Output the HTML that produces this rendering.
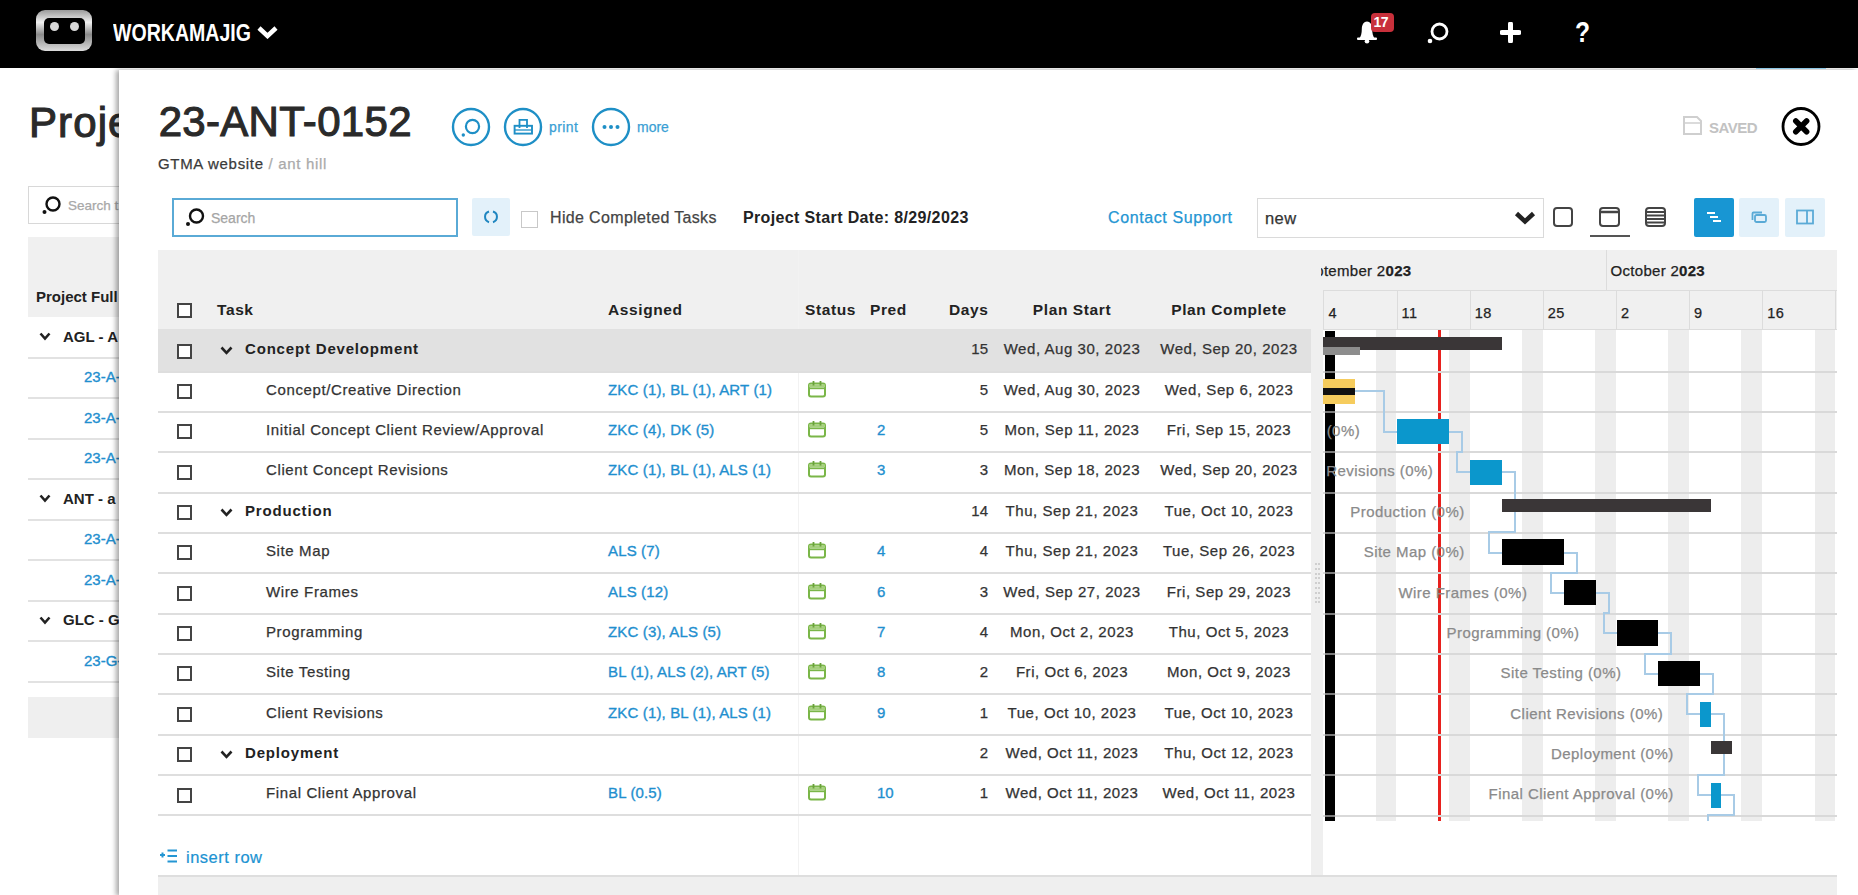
<!DOCTYPE html>
<html><head><meta charset="utf-8"><title>Workamajig</title>
<style>
*{box-sizing:border-box;margin:0;padding:0}
html,body{width:1858px;height:895px;overflow:hidden;background:#fff;font-family:"Liberation Sans", sans-serif;color:#333}
.ab{position:absolute}
.t{position:absolute;white-space:nowrap;line-height:1;-webkit-text-stroke:0.25px currentColor}
.cb{position:absolute;width:15px;height:15px;border:2px solid #444;background:#fff}
.blue{color:#1f8fcf;-webkit-text-stroke:0.35px #1f8fcf}
</style></head><body>

<div class="ab" style="left:0;top:0;width:1858px;height:68px;background:#000"></div>
<div class="ab" style="left:36px;top:10px;width:56px;height:40.8px;border-radius:9px;background:linear-gradient(180deg,#9a9a9a,#f0f0f0 30%,#8a8a8a 60%,#dcdcdc)"></div>
<div class="ab" style="left:43.5px;top:17.5px;width:41.5px;height:26.5px;border-radius:5px;background:#000"></div>
<div class="ab" style="left:50px;top:22.3px;width:9px;height:9px;border-radius:50%;background:#d8d8d8"></div>
<div class="ab" style="left:70px;top:22.3px;width:9px;height:9px;border-radius:50%;background:#d8d8d8"></div>
<div class="t" style="left:113px;top:22px;font-size:23px;font-weight:700;-webkit-text-stroke:0;color:#fff;transform:scaleX(0.85);transform-origin:0 0">WORKAMAJIG</div>
<svg class="ab" style="left:257px;top:26px" width="21" height="13" viewBox="0 0 21 13"><path d="M2 2 L10.5 10 L19 2" stroke="#fff" stroke-width="4.5" fill="none" stroke-linejoin="miter"/></svg>
<svg class="ab" style="left:1355px;top:17px" width="26" height="28" viewBox="0 0 26 28">
<path d="M4.5 21.5 C6 19 6.8 16.5 6.8 12 C6.8 7.5 9 4.5 12 4.5 C15 4.5 17.2 7.5 17.2 12 C17.2 16.5 18 19 19.5 21.5 Z" fill="#fff"/>
<rect x="2" y="20.5" width="20" height="2.6" rx="1" fill="#fff"/><circle cx="12" cy="24.2" r="2.3" fill="#fff"/></svg>
<div class="ab" style="left:1371px;top:13px;width:23px;height:19px;border-radius:4px;background:#c8303b"></div>
<div class="t" style="left:1373.5px;top:14.5px;font-size:14px;font-weight:700;-webkit-text-stroke:0;color:#fff;letter-spacing:-0.6px">17</div>
<svg class="ab" style="left:1427px;top:22px" width="23" height="22" viewBox="0 0 23 22">
<circle cx="12.5" cy="9.5" r="7.5" stroke="#fff" stroke-width="2.8" fill="none"/><circle cx="3" cy="19" r="2.3" fill="#fff"/></svg>
<svg class="ab" style="left:1500px;top:22px" width="21" height="21" viewBox="0 0 21 21">
<path d="M10.5 2 V19 M2 10.5 H19" stroke="#fff" stroke-width="5" stroke-linecap="round"/></svg>
<div class="t" style="left:1574.5px;top:18px;font-size:29px;font-weight:700;-webkit-text-stroke:0;color:#fff;transform:scaleX(0.85);transform-origin:0 0">?</div>
<div class="t" style="left:29px;top:101.5px;font-size:42px;color:#2a2a2a;-webkit-text-stroke:1.1px #2a2a2a;letter-spacing:1.1px">Projects</div>
<div class="ab" style="left:28px;top:186px;width:120px;height:38px;border:1px solid #d8d8d8;background:#fff"></div>
<svg class="ab" style="left:41px;top:195px" width="22" height="20" viewBox="0 0 22 20"><circle cx="12" cy="9" r="6.5" stroke="#111" stroke-width="2.4" fill="none"/><circle cx="3.5" cy="17" r="2" fill="#111"/></svg>
<div class="t" style="left:68px;top:199px;font-size:13.5px;color:#a8a8a8">Search t</div>
<div class="ab" style="left:28px;top:237px;width:100px;height:80px;background:#f0f0f0"></div>
<div class="t" style="left:36px;top:289px;font-size:15px;font-weight:700;-webkit-text-stroke:0;color:#222">Project Full</div>
<svg class="ab" style="left:39px;top:332.0px" width="12" height="9" viewBox="0 0 12 9"><path d="M1.5 1.5 L6 6.5 L10.5 1.5" stroke="#222" stroke-width="2.6" fill="none"/></svg>
<div class="t" style="left:63px;top:328.5px;font-size:15px;font-weight:700;-webkit-text-stroke:0;color:#222">AGL - A</div>
<div class="ab" style="left:28px;top:356.5px;width:100px;height:2px;background:#e2e2e2"></div>
<div class="t blue" style="left:84px;top:369.0px;font-size:15px">23-A-0001</div>
<div class="ab" style="left:28px;top:397.0px;width:100px;height:2px;background:#e2e2e2"></div>
<div class="t blue" style="left:84px;top:409.5px;font-size:15px">23-A-0001</div>
<div class="ab" style="left:28px;top:437.5px;width:100px;height:2px;background:#e2e2e2"></div>
<div class="t blue" style="left:84px;top:450.0px;font-size:15px">23-A-0001</div>
<div class="ab" style="left:28px;top:478.0px;width:100px;height:2px;background:#e2e2e2"></div>
<svg class="ab" style="left:39px;top:494.0px" width="12" height="9" viewBox="0 0 12 9"><path d="M1.5 1.5 L6 6.5 L10.5 1.5" stroke="#222" stroke-width="2.6" fill="none"/></svg>
<div class="t" style="left:63px;top:490.5px;font-size:15px;font-weight:700;-webkit-text-stroke:0;color:#222">ANT - a</div>
<div class="ab" style="left:28px;top:518.5px;width:100px;height:2px;background:#e2e2e2"></div>
<div class="t blue" style="left:84px;top:531.0px;font-size:15px">23-A-0001</div>
<div class="ab" style="left:28px;top:559.0px;width:100px;height:2px;background:#e2e2e2"></div>
<div class="t blue" style="left:84px;top:571.5px;font-size:15px">23-A-0001</div>
<div class="ab" style="left:28px;top:599.5px;width:100px;height:2px;background:#e2e2e2"></div>
<svg class="ab" style="left:39px;top:615.5px" width="12" height="9" viewBox="0 0 12 9"><path d="M1.5 1.5 L6 6.5 L10.5 1.5" stroke="#222" stroke-width="2.6" fill="none"/></svg>
<div class="t" style="left:63px;top:612.0px;font-size:15px;font-weight:700;-webkit-text-stroke:0;color:#222">GLC - G</div>
<div class="ab" style="left:28px;top:640.0px;width:100px;height:2px;background:#e2e2e2"></div>
<div class="t blue" style="left:84px;top:652.5px;font-size:15px">23-G-0001</div>
<div class="ab" style="left:28px;top:680.5px;width:100px;height:2px;background:#e2e2e2"></div>
<div class="ab" style="left:28px;top:697px;width:100px;height:41px;background:#efefef"></div>
<div class="ab" style="left:119px;top:69.5px;width:1739px;height:826px;background:#fff;box-shadow:-3px 0 5px rgba(0,0,0,0.35)"></div>
<div class="ab" style="left:1756px;top:68px;width:70px;height:1px;background:#8cc6e4"></div>
<div class="t" style="left:158.7px;top:100.8px;font-size:42px;color:#2a2a2a;-webkit-text-stroke:1.1px #2a2a2a;letter-spacing:0.3px">23-ANT-0152</div>
<svg class="ab" style="left:451px;top:106.5px" width="40" height="40" viewBox="0 0 40 40"><circle cx="20" cy="20" r="18" stroke="#1e8fc6" stroke-width="2.4" fill="none"/><circle cx="21.5" cy="19.5" r="6.6" stroke="#1e8fc6" stroke-width="2.2" fill="none"/><circle cx="12.3" cy="28" r="1.7" fill="#1e8fc6"/></svg>
<svg class="ab" style="left:503px;top:106.5px" width="40" height="40" viewBox="0 0 40 40"><circle cx="20" cy="20" r="18" stroke="#1e8fc6" stroke-width="2.4" fill="none"/><path d="M16.5 21 V12.8 H24 V21" stroke="#1e8fc6" stroke-width="1.8" fill="none"/><rect x="11.6" y="18.8" width="17.4" height="7.8" stroke="#1e8fc6" stroke-width="1.9" fill="none"/><path d="M12 23 H28.5" stroke="#1e8fc6" stroke-width="1.3"/></svg>
<div class="t" style="left:549px;top:120px;font-size:14px;color:#3a9fd5;letter-spacing:0.4px">print</div>
<svg class="ab" style="left:591px;top:106.5px" width="40" height="40" viewBox="0 0 40 40"><circle cx="20" cy="20" r="18" stroke="#1e8fc6" stroke-width="2.4" fill="none"/><circle cx="13.5" cy="20" r="2" fill="#1e8fc6"/><circle cx="20" cy="20" r="2" fill="#1e8fc6"/><circle cx="26.5" cy="20" r="2" fill="#1e8fc6"/></svg>
<div class="t" style="left:637px;top:120px;font-size:14px;color:#3a9fd5">more</div>
<div class="t" style="left:158px;top:156px;font-size:15px;color:#3a3a3a;letter-spacing:0.68px">GTMA website <span style="color:#aaa">/ ant hill</span></div>
<svg class="ab" style="left:1682px;top:115px" width="21" height="21" viewBox="0 0 21 21"><path d="M2 2 H15 L19 6 V19 H2 Z" stroke="#cfcfcf" stroke-width="2" fill="none"/><path d="M2 8 H19" stroke="#cfcfcf" stroke-width="1.5"/></svg>
<div class="t" style="left:1709px;top:119.5px;font-size:15px;font-weight:700;-webkit-text-stroke:0;color:#c2c2c2;letter-spacing:-0.5px">SAVED</div>
<svg class="ab" style="left:1780px;top:106px" width="42" height="42" viewBox="0 0 42 42"><circle cx="21" cy="20.5" r="18" stroke="#000" stroke-width="2.8" fill="none"/><path d="M15.8 15 L26.6 25.8 M26.6 15 L15.8 25.8" stroke="#000" stroke-width="5.6" stroke-linecap="round"/></svg>
<div class="ab" style="left:172px;top:198px;width:286px;height:39px;border:2px solid #5aaad6;background:#fff"></div>
<svg class="ab" style="left:184px;top:207px" width="22" height="20" viewBox="0 0 22 20"><circle cx="12.5" cy="9" r="6.5" stroke="#111" stroke-width="2.4" fill="none"/><circle cx="4" cy="17" r="2" fill="#111"/></svg>
<div class="t" style="left:211px;top:211px;font-size:14px;color:#a5a5a5">Search</div>
<div class="ab" style="left:472px;top:198px;width:38px;height:38px;background:#e3f1fa;border-radius:2px"></div>
<svg class="ab" style="left:481px;top:207px" width="20" height="20" viewBox="0 0 20 20"><path d="M8 4.5 A5.6 5.6 0 0 0 8 15.2 M12 4.5 A5.6 5.6 0 0 1 12 15.2" stroke="#1f86c0" stroke-width="2" fill="none"/></svg>
<div class="ab" style="left:521px;top:211px;width:17px;height:17px;border:1.5px solid #c8c8c8;background:#fff"></div>
<div class="t" style="left:550px;top:210px;font-size:16px;color:#444;letter-spacing:0.35px">Hide Completed Tasks</div>
<div class="t" style="left:743px;top:210px;font-size:16px;font-weight:700;-webkit-text-stroke:0;color:#222;letter-spacing:0.36px">Project Start Date: 8/29/2023</div>
<div class="t" style="left:1108px;top:210px;font-size:16px;color:#2496d3;letter-spacing:0.6px">Contact Support</div>
<div class="ab" style="left:1257px;top:198px;width:287px;height:40px;border:1.5px solid #dadada;background:#fff"></div>
<div class="t" style="left:1265px;top:209.5px;font-size:16.5px;color:#333;letter-spacing:0.4px">new</div>
<svg class="ab" style="left:1514px;top:211px" width="22" height="14" viewBox="0 0 22 14"><path d="M2.5 2.5 L11 10.5 L19.5 2.5" stroke="#222" stroke-width="4.5" fill="none"/></svg>
<svg class="ab" style="left:1552px;top:206px" width="22" height="22" viewBox="0 0 22 22"><rect x="2" y="2" width="18" height="18" rx="3" stroke="#444" stroke-width="2" fill="none"/></svg>
<svg class="ab" style="left:1598px;top:206px" width="23" height="22" viewBox="0 0 23 22"><rect x="2" y="2" width="19" height="18" rx="3" stroke="#444" stroke-width="2" fill="none"/><path d="M2 6 H21" stroke="#444" stroke-width="2.5"/></svg>
<div class="ab" style="left:1590px;top:235px;width:40px;height:2px;background:#555"></div>
<svg class="ab" style="left:1644px;top:206px" width="23" height="22" viewBox="0 0 23 22"><rect x="2" y="2" width="19" height="18" rx="3" stroke="#444" stroke-width="2" fill="none"/><path d="M3 6 H20 M3 9.5 H20 M3 13 H20 M3 16.5 H20" stroke="#444" stroke-width="2"/></svg>
<div class="ab" style="left:1694px;top:198px;width:40px;height:39px;background:#1896d3;border-radius:2px"></div>
<svg class="ab" style="left:1702px;top:207px" width="24" height="20" viewBox="0 0 24 20"><path d="M5 6 H13 M8 10 H16 M11 14 H19" stroke="#fff" stroke-width="2"/></svg>
<div class="ab" style="left:1739px;top:198px;width:40px;height:39px;background:#e3f1fa;border-radius:2px"></div>
<svg class="ab" style="left:1747px;top:207px" width="24" height="20" viewBox="0 0 24 20"><rect x="8" y="8" width="11" height="7" rx="1.5" stroke="#5aaad6" stroke-width="1.8" fill="none"/><path d="M5.5 13 V6.5 Q5.5 5.5 6.5 5.5 H15" stroke="#5aaad6" stroke-width="1.8" fill="none"/></svg>
<div class="ab" style="left:1785px;top:198px;width:40px;height:39px;background:#e3f1fa;border-radius:2px"></div>
<svg class="ab" style="left:1793px;top:207px" width="24" height="20" viewBox="0 0 24 20"><rect x="4" y="3.5" width="16" height="13" stroke="#5aaad6" stroke-width="1.8" fill="none"/><path d="M14 3.5 V16.5" stroke="#5aaad6" stroke-width="1.8"/></svg>
<div class="ab" style="left:158px;top:250px;width:1153px;height:79px;background:#f0f0f0"></div>
<div class="ab" style="left:1311px;top:250px;width:12px;height:626px;background:#efefef"></div>
<div class="ab" style="left:1314.5px;top:563.0px;width:2px;height:2px;background:#cfcfcf"></div><div class="ab" style="left:1318px;top:563.0px;width:2px;height:2px;background:#cfcfcf"></div>
<div class="ab" style="left:1314.5px;top:567.8px;width:2px;height:2px;background:#cfcfcf"></div><div class="ab" style="left:1318px;top:567.8px;width:2px;height:2px;background:#cfcfcf"></div>
<div class="ab" style="left:1314.5px;top:572.6px;width:2px;height:2px;background:#cfcfcf"></div><div class="ab" style="left:1318px;top:572.6px;width:2px;height:2px;background:#cfcfcf"></div>
<div class="ab" style="left:1314.5px;top:577.4px;width:2px;height:2px;background:#cfcfcf"></div><div class="ab" style="left:1318px;top:577.4px;width:2px;height:2px;background:#cfcfcf"></div>
<div class="ab" style="left:1314.5px;top:582.2px;width:2px;height:2px;background:#cfcfcf"></div><div class="ab" style="left:1318px;top:582.2px;width:2px;height:2px;background:#cfcfcf"></div>
<div class="ab" style="left:1314.5px;top:587.0px;width:2px;height:2px;background:#cfcfcf"></div><div class="ab" style="left:1318px;top:587.0px;width:2px;height:2px;background:#cfcfcf"></div>
<div class="ab" style="left:1314.5px;top:591.8px;width:2px;height:2px;background:#cfcfcf"></div><div class="ab" style="left:1318px;top:591.8px;width:2px;height:2px;background:#cfcfcf"></div>
<div class="ab" style="left:1314.5px;top:596.6px;width:2px;height:2px;background:#cfcfcf"></div><div class="ab" style="left:1318px;top:596.6px;width:2px;height:2px;background:#cfcfcf"></div>
<div class="ab" style="left:1314.5px;top:601.4px;width:2px;height:2px;background:#cfcfcf"></div><div class="ab" style="left:1318px;top:601.4px;width:2px;height:2px;background:#cfcfcf"></div>
<div class="cb" style="left:177px;top:303px"></div>
<div class="t" style="left:217px;top:302px;font-size:15.5px;font-weight:700;-webkit-text-stroke:0;color:#222;letter-spacing:0.6px">Task</div>
<div class="t" style="left:608px;top:302px;font-size:15.5px;font-weight:700;-webkit-text-stroke:0;color:#222;letter-spacing:0.6px">Assigned</div>
<div class="t" style="left:805px;top:302px;font-size:15.5px;font-weight:700;-webkit-text-stroke:0;color:#222;letter-spacing:0.6px">Status</div>
<div class="t" style="left:870px;top:302px;font-size:15.5px;font-weight:700;-webkit-text-stroke:0;color:#222;letter-spacing:0.6px">Pred</div>
<div class="t" style="left:788.5px;width:200px;text-align:right;top:302px;font-size:15.5px;font-weight:700;-webkit-text-stroke:0;color:#222;letter-spacing:0.6px">Days</div>
<div class="t" style="left:972px;width:200px;text-align:center;top:302px;font-size:15.5px;font-weight:700;-webkit-text-stroke:0;color:#222;letter-spacing:0.6px">Plan Start</div>
<div class="t" style="left:1129px;width:200px;text-align:center;top:302px;font-size:15.5px;font-weight:700;-webkit-text-stroke:0;color:#222;letter-spacing:0.6px">Plan Complete</div>
<div class="ab" style="left:798px;top:250px;width:1px;height:645px;background:#f2f2f2"></div>
<div class="ab" style="left:158px;top:329px;width:1153px;height:42.00px;background:#e1e1e1"></div>
<div class="ab" style="left:158px;top:370.50px;width:1153px;height:2px;background:#dedede"></div>
<div class="cb" style="left:177px;top:343.5px"></div>
<svg class="ab" style="left:220px;top:346.3px" width="13" height="9" viewBox="0 0 13 9"><path d="M1.5 1.5 L6.5 6.8 L11.5 1.5" stroke="#222" stroke-width="2.6" fill="none"/></svg>
<div class="t" style="left:245px;top:341.3px;font-size:15px;font-weight:700;-webkit-text-stroke:0;color:#222;letter-spacing:0.82px">Concept Development</div>
<div class="t" style="left:788px;width:200px;text-align:right;top:341.3px;font-size:15px;color:#333">15</div>
<div class="t" style="left:972px;width:200px;text-align:center;top:341.3px;font-size:15px;color:#333;letter-spacing:0.55px">Wed, Aug 30, 2023</div>
<div class="t" style="left:1129px;width:200px;text-align:center;top:341.3px;font-size:15px;color:#333;letter-spacing:0.55px">Wed, Sep 20, 2023</div>
<div class="ab" style="left:158px;top:410.86px;width:1153px;height:2px;background:#dedede"></div>
<div class="cb" style="left:177px;top:383.9px"></div>
<div class="t" style="left:266px;top:381.7px;font-size:15px;color:#333;letter-spacing:0.62px">Concept/Creative Direction</div>
<div class="t blue" style="left:608px;top:381.7px;font-size:15px;letter-spacing:0.15px">ZKC (1), BL (1), ART (1)</div>
<svg class="ab" style="left:807px;top:379.7px" width="20" height="19" viewBox="0 0 20 19"><rect x="2" y="3.5" width="16" height="13" rx="2" stroke="#7ab648" stroke-width="2" fill="none"/><path d="M2 8.3 H18" stroke="#7ab648" stroke-width="1.8"/><path d="M2 5.8 H18" stroke="#a6d07e" stroke-width="3"/><path d="M6.5 1 V5.5 M13.5 1 V5.5" stroke="#6aa23a" stroke-width="1.8"/></svg>
<div class="t" style="left:788px;width:200px;text-align:right;top:381.7px;font-size:15px;color:#333">5</div>
<div class="t" style="left:972px;width:200px;text-align:center;top:381.7px;font-size:15px;color:#333;letter-spacing:0.55px">Wed, Aug 30, 2023</div>
<div class="t" style="left:1129px;width:200px;text-align:center;top:381.7px;font-size:15px;color:#333;letter-spacing:0.55px">Wed, Sep 6, 2023</div>
<div class="ab" style="left:158px;top:451.22px;width:1153px;height:2px;background:#dedede"></div>
<div class="cb" style="left:177px;top:424.2px"></div>
<div class="t" style="left:266px;top:422.0px;font-size:15px;color:#333;letter-spacing:0.62px">Initial Concept Client Review/Approval</div>
<div class="t blue" style="left:608px;top:422.0px;font-size:15px;letter-spacing:0.15px">ZKC (4), DK (5)</div>
<svg class="ab" style="left:807px;top:420.0px" width="20" height="19" viewBox="0 0 20 19"><rect x="2" y="3.5" width="16" height="13" rx="2" stroke="#7ab648" stroke-width="2" fill="none"/><path d="M2 8.3 H18" stroke="#7ab648" stroke-width="1.8"/><path d="M2 5.8 H18" stroke="#a6d07e" stroke-width="3"/><path d="M6.5 1 V5.5 M13.5 1 V5.5" stroke="#6aa23a" stroke-width="1.8"/></svg>
<div class="t blue" style="left:877px;top:422.0px;font-size:15px">2</div>
<div class="t" style="left:788px;width:200px;text-align:right;top:422.0px;font-size:15px;color:#333">5</div>
<div class="t" style="left:972px;width:200px;text-align:center;top:422.0px;font-size:15px;color:#333;letter-spacing:0.55px">Mon, Sep 11, 2023</div>
<div class="t" style="left:1129px;width:200px;text-align:center;top:422.0px;font-size:15px;color:#333;letter-spacing:0.55px">Fri, Sep 15, 2023</div>
<div class="ab" style="left:158px;top:491.58px;width:1153px;height:2px;background:#dedede"></div>
<div class="cb" style="left:177px;top:464.6px"></div>
<div class="t" style="left:266px;top:462.4px;font-size:15px;color:#333;letter-spacing:0.62px">Client Concept Revisions</div>
<div class="t blue" style="left:608px;top:462.4px;font-size:15px;letter-spacing:0.15px">ZKC (1), BL (1), ALS (1)</div>
<svg class="ab" style="left:807px;top:460.4px" width="20" height="19" viewBox="0 0 20 19"><rect x="2" y="3.5" width="16" height="13" rx="2" stroke="#7ab648" stroke-width="2" fill="none"/><path d="M2 8.3 H18" stroke="#7ab648" stroke-width="1.8"/><path d="M2 5.8 H18" stroke="#a6d07e" stroke-width="3"/><path d="M6.5 1 V5.5 M13.5 1 V5.5" stroke="#6aa23a" stroke-width="1.8"/></svg>
<div class="t blue" style="left:877px;top:462.4px;font-size:15px">3</div>
<div class="t" style="left:788px;width:200px;text-align:right;top:462.4px;font-size:15px;color:#333">3</div>
<div class="t" style="left:972px;width:200px;text-align:center;top:462.4px;font-size:15px;color:#333;letter-spacing:0.55px">Mon, Sep 18, 2023</div>
<div class="t" style="left:1129px;width:200px;text-align:center;top:462.4px;font-size:15px;color:#333;letter-spacing:0.55px">Wed, Sep 20, 2023</div>
<div class="ab" style="left:158px;top:531.94px;width:1153px;height:2px;background:#dedede"></div>
<div class="cb" style="left:177px;top:505.0px"></div>
<svg class="ab" style="left:220px;top:507.8px" width="13" height="9" viewBox="0 0 13 9"><path d="M1.5 1.5 L6.5 6.8 L11.5 1.5" stroke="#222" stroke-width="2.6" fill="none"/></svg>
<div class="t" style="left:245px;top:502.8px;font-size:15px;font-weight:700;-webkit-text-stroke:0;color:#222;letter-spacing:0.82px">Production</div>
<div class="t" style="left:788px;width:200px;text-align:right;top:502.8px;font-size:15px;color:#333">14</div>
<div class="t" style="left:972px;width:200px;text-align:center;top:502.8px;font-size:15px;color:#333;letter-spacing:0.55px">Thu, Sep 21, 2023</div>
<div class="t" style="left:1129px;width:200px;text-align:center;top:502.8px;font-size:15px;color:#333;letter-spacing:0.55px">Tue, Oct 10, 2023</div>
<div class="ab" style="left:158px;top:572.30px;width:1153px;height:2px;background:#dedede"></div>
<div class="cb" style="left:177px;top:545.3px"></div>
<div class="t" style="left:266px;top:543.1px;font-size:15px;color:#333;letter-spacing:0.62px">Site Map</div>
<div class="t blue" style="left:608px;top:543.1px;font-size:15px;letter-spacing:0.15px">ALS (7)</div>
<svg class="ab" style="left:807px;top:541.1px" width="20" height="19" viewBox="0 0 20 19"><rect x="2" y="3.5" width="16" height="13" rx="2" stroke="#7ab648" stroke-width="2" fill="none"/><path d="M2 8.3 H18" stroke="#7ab648" stroke-width="1.8"/><path d="M2 5.8 H18" stroke="#a6d07e" stroke-width="3"/><path d="M6.5 1 V5.5 M13.5 1 V5.5" stroke="#6aa23a" stroke-width="1.8"/></svg>
<div class="t blue" style="left:877px;top:543.1px;font-size:15px">4</div>
<div class="t" style="left:788px;width:200px;text-align:right;top:543.1px;font-size:15px;color:#333">4</div>
<div class="t" style="left:972px;width:200px;text-align:center;top:543.1px;font-size:15px;color:#333;letter-spacing:0.55px">Thu, Sep 21, 2023</div>
<div class="t" style="left:1129px;width:200px;text-align:center;top:543.1px;font-size:15px;color:#333;letter-spacing:0.55px">Tue, Sep 26, 2023</div>
<div class="ab" style="left:158px;top:612.66px;width:1153px;height:2px;background:#dedede"></div>
<div class="cb" style="left:177px;top:585.7px"></div>
<div class="t" style="left:266px;top:583.5px;font-size:15px;color:#333;letter-spacing:0.62px">Wire Frames</div>
<div class="t blue" style="left:608px;top:583.5px;font-size:15px;letter-spacing:0.15px">ALS (12)</div>
<svg class="ab" style="left:807px;top:581.5px" width="20" height="19" viewBox="0 0 20 19"><rect x="2" y="3.5" width="16" height="13" rx="2" stroke="#7ab648" stroke-width="2" fill="none"/><path d="M2 8.3 H18" stroke="#7ab648" stroke-width="1.8"/><path d="M2 5.8 H18" stroke="#a6d07e" stroke-width="3"/><path d="M6.5 1 V5.5 M13.5 1 V5.5" stroke="#6aa23a" stroke-width="1.8"/></svg>
<div class="t blue" style="left:877px;top:583.5px;font-size:15px">6</div>
<div class="t" style="left:788px;width:200px;text-align:right;top:583.5px;font-size:15px;color:#333">3</div>
<div class="t" style="left:972px;width:200px;text-align:center;top:583.5px;font-size:15px;color:#333;letter-spacing:0.55px">Wed, Sep 27, 2023</div>
<div class="t" style="left:1129px;width:200px;text-align:center;top:583.5px;font-size:15px;color:#333;letter-spacing:0.55px">Fri, Sep 29, 2023</div>
<div class="ab" style="left:158px;top:653.02px;width:1153px;height:2px;background:#dedede"></div>
<div class="cb" style="left:177px;top:626.0px"></div>
<div class="t" style="left:266px;top:623.8px;font-size:15px;color:#333;letter-spacing:0.62px">Programming</div>
<div class="t blue" style="left:608px;top:623.8px;font-size:15px;letter-spacing:0.15px">ZKC (3), ALS (5)</div>
<svg class="ab" style="left:807px;top:621.8px" width="20" height="19" viewBox="0 0 20 19"><rect x="2" y="3.5" width="16" height="13" rx="2" stroke="#7ab648" stroke-width="2" fill="none"/><path d="M2 8.3 H18" stroke="#7ab648" stroke-width="1.8"/><path d="M2 5.8 H18" stroke="#a6d07e" stroke-width="3"/><path d="M6.5 1 V5.5 M13.5 1 V5.5" stroke="#6aa23a" stroke-width="1.8"/></svg>
<div class="t blue" style="left:877px;top:623.8px;font-size:15px">7</div>
<div class="t" style="left:788px;width:200px;text-align:right;top:623.8px;font-size:15px;color:#333">4</div>
<div class="t" style="left:972px;width:200px;text-align:center;top:623.8px;font-size:15px;color:#333;letter-spacing:0.55px">Mon, Oct 2, 2023</div>
<div class="t" style="left:1129px;width:200px;text-align:center;top:623.8px;font-size:15px;color:#333;letter-spacing:0.55px">Thu, Oct 5, 2023</div>
<div class="ab" style="left:158px;top:693.38px;width:1153px;height:2px;background:#dedede"></div>
<div class="cb" style="left:177px;top:666.4px"></div>
<div class="t" style="left:266px;top:664.2px;font-size:15px;color:#333;letter-spacing:0.62px">Site Testing</div>
<div class="t blue" style="left:608px;top:664.2px;font-size:15px;letter-spacing:0.15px">BL (1), ALS (2), ART (5)</div>
<svg class="ab" style="left:807px;top:662.2px" width="20" height="19" viewBox="0 0 20 19"><rect x="2" y="3.5" width="16" height="13" rx="2" stroke="#7ab648" stroke-width="2" fill="none"/><path d="M2 8.3 H18" stroke="#7ab648" stroke-width="1.8"/><path d="M2 5.8 H18" stroke="#a6d07e" stroke-width="3"/><path d="M6.5 1 V5.5 M13.5 1 V5.5" stroke="#6aa23a" stroke-width="1.8"/></svg>
<div class="t blue" style="left:877px;top:664.2px;font-size:15px">8</div>
<div class="t" style="left:788px;width:200px;text-align:right;top:664.2px;font-size:15px;color:#333">2</div>
<div class="t" style="left:972px;width:200px;text-align:center;top:664.2px;font-size:15px;color:#333;letter-spacing:0.55px">Fri, Oct 6, 2023</div>
<div class="t" style="left:1129px;width:200px;text-align:center;top:664.2px;font-size:15px;color:#333;letter-spacing:0.55px">Mon, Oct 9, 2023</div>
<div class="ab" style="left:158px;top:733.74px;width:1153px;height:2px;background:#dedede"></div>
<div class="cb" style="left:177px;top:706.8px"></div>
<div class="t" style="left:266px;top:704.6px;font-size:15px;color:#333;letter-spacing:0.62px">Client Revisions</div>
<div class="t blue" style="left:608px;top:704.6px;font-size:15px;letter-spacing:0.15px">ZKC (1), BL (1), ALS (1)</div>
<svg class="ab" style="left:807px;top:702.6px" width="20" height="19" viewBox="0 0 20 19"><rect x="2" y="3.5" width="16" height="13" rx="2" stroke="#7ab648" stroke-width="2" fill="none"/><path d="M2 8.3 H18" stroke="#7ab648" stroke-width="1.8"/><path d="M2 5.8 H18" stroke="#a6d07e" stroke-width="3"/><path d="M6.5 1 V5.5 M13.5 1 V5.5" stroke="#6aa23a" stroke-width="1.8"/></svg>
<div class="t blue" style="left:877px;top:704.6px;font-size:15px">9</div>
<div class="t" style="left:788px;width:200px;text-align:right;top:704.6px;font-size:15px;color:#333">1</div>
<div class="t" style="left:972px;width:200px;text-align:center;top:704.6px;font-size:15px;color:#333;letter-spacing:0.55px">Tue, Oct 10, 2023</div>
<div class="t" style="left:1129px;width:200px;text-align:center;top:704.6px;font-size:15px;color:#333;letter-spacing:0.55px">Tue, Oct 10, 2023</div>
<div class="ab" style="left:158px;top:774.10px;width:1153px;height:2px;background:#dedede"></div>
<div class="cb" style="left:177px;top:747.1px"></div>
<svg class="ab" style="left:220px;top:749.9px" width="13" height="9" viewBox="0 0 13 9"><path d="M1.5 1.5 L6.5 6.8 L11.5 1.5" stroke="#222" stroke-width="2.6" fill="none"/></svg>
<div class="t" style="left:245px;top:744.9px;font-size:15px;font-weight:700;-webkit-text-stroke:0;color:#222;letter-spacing:0.82px">Deployment</div>
<div class="t" style="left:788px;width:200px;text-align:right;top:744.9px;font-size:15px;color:#333">2</div>
<div class="t" style="left:972px;width:200px;text-align:center;top:744.9px;font-size:15px;color:#333;letter-spacing:0.55px">Wed, Oct 11, 2023</div>
<div class="t" style="left:1129px;width:200px;text-align:center;top:744.9px;font-size:15px;color:#333;letter-spacing:0.55px">Thu, Oct 12, 2023</div>
<div class="ab" style="left:158px;top:814.46px;width:1153px;height:2px;background:#dedede"></div>
<div class="cb" style="left:177px;top:787.5px"></div>
<div class="t" style="left:266px;top:785.3px;font-size:15px;color:#333;letter-spacing:0.62px">Final Client Approval</div>
<div class="t blue" style="left:608px;top:785.3px;font-size:15px;letter-spacing:0.15px">BL (0.5)</div>
<svg class="ab" style="left:807px;top:783.3px" width="20" height="19" viewBox="0 0 20 19"><rect x="2" y="3.5" width="16" height="13" rx="2" stroke="#7ab648" stroke-width="2" fill="none"/><path d="M2 8.3 H18" stroke="#7ab648" stroke-width="1.8"/><path d="M2 5.8 H18" stroke="#a6d07e" stroke-width="3"/><path d="M6.5 1 V5.5 M13.5 1 V5.5" stroke="#6aa23a" stroke-width="1.8"/></svg>
<div class="t blue" style="left:877px;top:785.3px;font-size:15px">10</div>
<div class="t" style="left:788px;width:200px;text-align:right;top:785.3px;font-size:15px;color:#333">1</div>
<div class="t" style="left:972px;width:200px;text-align:center;top:785.3px;font-size:15px;color:#333;letter-spacing:0.55px">Wed, Oct 11, 2023</div>
<div class="t" style="left:1129px;width:200px;text-align:center;top:785.3px;font-size:15px;color:#333;letter-spacing:0.55px">Wed, Oct 11, 2023</div>
<svg class="ab" style="left:159px;top:848px" width="20" height="16" viewBox="0 0 20 16"><path d="M8.5 2.5 H18 M8.5 8 H18 M8.5 13.5 H18" stroke="#2496d3" stroke-width="2.2"/><path d="M1 7 H6 M3.5 4.5 V9.5" stroke="#2496d3" stroke-width="2"/></svg>
<div class="t" style="left:186px;top:848.5px;font-size:16.5px;color:#2093d2;letter-spacing:0.5px;-webkit-text-stroke:0.2px #2093d2">insert row</div>
<div class="ab" style="left:158px;top:875px;width:1679px;height:20px;background:#efefef;border-top:2px solid #dedede"></div>
<div class="ab" style="left:1311px;top:250px;width:526px;height:80px;background:#f0f0f0"></div>
<div class="ab" style="left:1321px;top:250px;width:516px;height:80px;overflow:hidden">
<div class="t" style="left:-24.7px;top:13px;font-size:15px;color:#222;letter-spacing:0.3px">September 2<b style="font-weight:700">023</b></div>
<div class="ab" style="left:284.5px;top:0;width:1px;height:40px;background:#dcdcdc"></div>
<div class="t" style="left:289.5px;top:13px;font-size:15px;color:#222;letter-spacing:0.3px">October 2<b style="font-weight:700">023</b></div>
<div class="ab" style="left:2px;top:40px;width:514px;height:1px;background:#dcdcdc"></div>
<div class="ab" style="left:2px;top:79px;width:514px;height:1px;background:#dcdcdc"></div>
<div class="ab" style="left:2.4px;top:40px;width:1px;height:40px;background:#dcdcdc"></div>
<div class="t" style="left:7.4px;top:56px;font-size:14.5px;color:#222;letter-spacing:0.4px">4</div>
<div class="ab" style="left:75.5px;top:40px;width:1px;height:40px;background:#dcdcdc"></div>
<div class="t" style="left:80.5px;top:56px;font-size:14.5px;color:#222;letter-spacing:0.4px">11</div>
<div class="ab" style="left:148.7px;top:40px;width:1px;height:40px;background:#dcdcdc"></div>
<div class="t" style="left:153.7px;top:56px;font-size:14.5px;color:#222;letter-spacing:0.4px">18</div>
<div class="ab" style="left:221.8px;top:40px;width:1px;height:40px;background:#dcdcdc"></div>
<div class="t" style="left:226.8px;top:56px;font-size:14.5px;color:#222;letter-spacing:0.4px">25</div>
<div class="ab" style="left:295.0px;top:40px;width:1px;height:40px;background:#dcdcdc"></div>
<div class="t" style="left:300.0px;top:56px;font-size:14.5px;color:#222;letter-spacing:0.4px">2</div>
<div class="ab" style="left:368.1px;top:40px;width:1px;height:40px;background:#dcdcdc"></div>
<div class="t" style="left:373.1px;top:56px;font-size:14.5px;color:#222;letter-spacing:0.4px">9</div>
<div class="ab" style="left:441.3px;top:40px;width:1px;height:40px;background:#dcdcdc"></div>
<div class="t" style="left:446.3px;top:56px;font-size:14.5px;color:#222;letter-spacing:0.4px">16</div>
<div class="ab" style="left:514.4px;top:40px;width:1px;height:40px;background:#dcdcdc"></div>
<div class="t" style="left:519.4px;top:56px;font-size:14.5px;color:#222;letter-spacing:0.4px">23</div>
</div>
<div class="ab" style="left:1323px;top:330px;width:514px;height:491px;overflow:hidden;background:#fff">
<div class="ab" style="left:-20.5px;top:0;width:20.9px;height:491px;background:#ededed"></div>
<div class="ab" style="left:52.6px;top:0;width:20.9px;height:491px;background:#ededed"></div>
<div class="ab" style="left:125.8px;top:0;width:20.9px;height:491px;background:#ededed"></div>
<div class="ab" style="left:198.9px;top:0;width:20.9px;height:491px;background:#ededed"></div>
<div class="ab" style="left:272.1px;top:0;width:20.9px;height:491px;background:#ededed"></div>
<div class="ab" style="left:345.2px;top:0;width:20.9px;height:491px;background:#ededed"></div>
<div class="ab" style="left:418.4px;top:0;width:20.9px;height:491px;background:#ededed"></div>
<div class="ab" style="left:491.5px;top:0;width:20.9px;height:491px;background:#ededed"></div>
<div class="ab" style="left:564.6px;top:0;width:20.9px;height:491px;background:#ededed"></div>
<div class="ab" style="left:1.5px;top:1px;width:10px;height:490px;background:#000"></div>
<div class="ab" style="left:114.5px;top:0;width:3px;height:491px;background:#e8211e"></div>
<div class="ab" style="left:0;top:40.5px;width:514px;height:2px;background:#d9d9d9"></div>
<div class="ab" style="left:1.5px;top:40.5px;width:10px;height:2px;background:#7a7a7a"></div>
<div class="ab" style="left:0;top:80.9px;width:514px;height:2px;background:#d9d9d9"></div>
<div class="ab" style="left:1.5px;top:80.9px;width:10px;height:2px;background:#7a7a7a"></div>
<div class="ab" style="left:0;top:121.2px;width:514px;height:2px;background:#d9d9d9"></div>
<div class="ab" style="left:1.5px;top:121.2px;width:10px;height:2px;background:#7a7a7a"></div>
<div class="ab" style="left:0;top:161.6px;width:514px;height:2px;background:#d9d9d9"></div>
<div class="ab" style="left:1.5px;top:161.6px;width:10px;height:2px;background:#7a7a7a"></div>
<div class="ab" style="left:0;top:201.9px;width:514px;height:2px;background:#d9d9d9"></div>
<div class="ab" style="left:1.5px;top:201.9px;width:10px;height:2px;background:#7a7a7a"></div>
<div class="ab" style="left:0;top:242.3px;width:514px;height:2px;background:#d9d9d9"></div>
<div class="ab" style="left:1.5px;top:242.3px;width:10px;height:2px;background:#7a7a7a"></div>
<div class="ab" style="left:0;top:282.7px;width:514px;height:2px;background:#d9d9d9"></div>
<div class="ab" style="left:1.5px;top:282.7px;width:10px;height:2px;background:#7a7a7a"></div>
<div class="ab" style="left:0;top:323.0px;width:514px;height:2px;background:#d9d9d9"></div>
<div class="ab" style="left:1.5px;top:323.0px;width:10px;height:2px;background:#7a7a7a"></div>
<div class="ab" style="left:0;top:363.4px;width:514px;height:2px;background:#d9d9d9"></div>
<div class="ab" style="left:1.5px;top:363.4px;width:10px;height:2px;background:#7a7a7a"></div>
<div class="ab" style="left:0;top:403.7px;width:514px;height:2px;background:#d9d9d9"></div>
<div class="ab" style="left:1.5px;top:403.7px;width:10px;height:2px;background:#7a7a7a"></div>
<div class="ab" style="left:0;top:444.1px;width:514px;height:2px;background:#d9d9d9"></div>
<div class="ab" style="left:1.5px;top:444.1px;width:10px;height:2px;background:#7a7a7a"></div>
<div class="ab" style="left:0;top:484.5px;width:514px;height:2px;background:#d9d9d9"></div>
<div class="ab" style="left:1.5px;top:484.5px;width:10px;height:2px;background:#7a7a7a"></div>
<div class="ab" style="left:31.35px;top:60.18px;width:30.80px;height:2px;background:#a8cbe6"></div>
<div class="ab" style="left:60.14px;top:60.18px;width:2px;height:42.36px;background:#a8cbe6"></div>
<div class="ab" style="left:60.14px;top:100.54px;width:15.00px;height:2px;background:#a8cbe6"></div>
<div class="ab" style="left:125.39px;top:100.54px;width:15.00px;height:2px;background:#a8cbe6"></div>
<div class="ab" style="left:138.39px;top:100.54px;width:2px;height:22.18px;background:#a8cbe6"></div>
<div class="ab" style="left:133.29px;top:120.72px;width:7.10px;height:2px;background:#a8cbe6"></div>
<div class="ab" style="left:133.29px;top:120.72px;width:2px;height:22.18px;background:#a8cbe6"></div>
<div class="ab" style="left:133.29px;top:140.90px;width:15.00px;height:2px;background:#a8cbe6"></div>
<div class="ab" style="left:177.63px;top:140.90px;width:15.00px;height:2px;background:#a8cbe6"></div>
<div class="ab" style="left:190.63px;top:140.90px;width:2px;height:62.54px;background:#a8cbe6"></div>
<div class="ab" style="left:164.63px;top:201.44px;width:28.00px;height:2px;background:#a8cbe6"></div>
<div class="ab" style="left:164.63px;top:201.44px;width:2px;height:22.18px;background:#a8cbe6"></div>
<div class="ab" style="left:164.63px;top:221.62px;width:15.00px;height:2px;background:#a8cbe6"></div>
<div class="ab" style="left:240.33px;top:221.62px;width:15.00px;height:2px;background:#a8cbe6"></div>
<div class="ab" style="left:253.33px;top:221.62px;width:2px;height:22.18px;background:#a8cbe6"></div>
<div class="ab" style="left:227.33px;top:241.80px;width:28.00px;height:2px;background:#a8cbe6"></div>
<div class="ab" style="left:227.33px;top:241.80px;width:2px;height:22.18px;background:#a8cbe6"></div>
<div class="ab" style="left:227.33px;top:261.98px;width:15.00px;height:2px;background:#a8cbe6"></div>
<div class="ab" style="left:271.67px;top:261.98px;width:15.00px;height:2px;background:#a8cbe6"></div>
<div class="ab" style="left:284.67px;top:261.98px;width:2px;height:22.18px;background:#a8cbe6"></div>
<div class="ab" style="left:279.57px;top:282.16px;width:7.10px;height:2px;background:#a8cbe6"></div>
<div class="ab" style="left:279.57px;top:282.16px;width:2px;height:22.18px;background:#a8cbe6"></div>
<div class="ab" style="left:279.57px;top:302.34px;width:15.00px;height:2px;background:#a8cbe6"></div>
<div class="ab" style="left:334.37px;top:302.34px;width:15.00px;height:2px;background:#a8cbe6"></div>
<div class="ab" style="left:347.37px;top:302.34px;width:2px;height:22.18px;background:#a8cbe6"></div>
<div class="ab" style="left:321.37px;top:322.52px;width:28.00px;height:2px;background:#a8cbe6"></div>
<div class="ab" style="left:321.37px;top:322.52px;width:2px;height:22.18px;background:#a8cbe6"></div>
<div class="ab" style="left:321.37px;top:342.70px;width:15.00px;height:2px;background:#a8cbe6"></div>
<div class="ab" style="left:376.16px;top:342.70px;width:15.00px;height:2px;background:#a8cbe6"></div>
<div class="ab" style="left:389.16px;top:342.70px;width:2px;height:22.18px;background:#a8cbe6"></div>
<div class="ab" style="left:363.16px;top:362.88px;width:28.00px;height:2px;background:#a8cbe6"></div>
<div class="ab" style="left:363.16px;top:362.88px;width:2px;height:22.18px;background:#a8cbe6"></div>
<div class="ab" style="left:363.16px;top:383.06px;width:15.00px;height:2px;background:#a8cbe6"></div>
<div class="ab" style="left:386.61px;top:383.06px;width:15.00px;height:2px;background:#a8cbe6"></div>
<div class="ab" style="left:399.61px;top:383.06px;width:2px;height:62.54px;background:#a8cbe6"></div>
<div class="ab" style="left:373.61px;top:443.60px;width:28.00px;height:2px;background:#a8cbe6"></div>
<div class="ab" style="left:373.61px;top:443.60px;width:2px;height:22.18px;background:#a8cbe6"></div>
<div class="ab" style="left:373.61px;top:463.78px;width:15.00px;height:2px;background:#a8cbe6"></div>
<div class="ab" style="left:397.06px;top:463.78px;width:15.00px;height:2px;background:#a8cbe6"></div>
<div class="ab" style="left:410.06px;top:463.78px;width:2px;height:22.18px;background:#a8cbe6"></div>
<div class="ab" style="left:384.06px;top:483.96px;width:28.00px;height:2px;background:#a8cbe6"></div>
<div class="ab" style="left:384.06px;top:483.96px;width:2px;height:42.18px;background:#a8cbe6"></div>
<div class="ab" style="left:-1.00px;top:7.44px;width:179.63px;height:12.80px;background:#3a3637"></div>
<div class="ab" style="left:-1.00px;top:48.80px;width:33.35px;height:25.60px;background:#f6cc5d"></div>
<div class="ab" style="left:-1.00px;top:58.40px;width:33.35px;height:6.20px;background:#111"></div>
<div class="ab" style="left:74.14px;top:89.36px;width:52.24px;height:25.00px;background:#0b97cc"></div>
<div class="t" style="left:-362.86px;width:400px;text-align:right;top:93.0px;font-size:15px;color:#8a8a8a;letter-spacing:0.45px">Initial Concept Client Review/Approval (0%)</div>
<div class="ab" style="left:147.29px;top:129.72px;width:31.35px;height:25.00px;background:#0b97cc"></div>
<div class="t" style="left:-289.71px;width:400px;text-align:right;top:133.4px;font-size:15px;color:#8a8a8a;letter-spacing:0.45px">Client Concept Revisions (0%)</div>
<div class="ab" style="left:178.63px;top:168.88px;width:208.98px;height:12.80px;background:#3a3637"></div>
<div class="t" style="left:-258.37px;width:400px;text-align:right;top:173.8px;font-size:15px;color:#8a8a8a;letter-spacing:0.45px">Production (0%)</div>
<div class="ab" style="left:178.63px;top:209.44px;width:62.69px;height:25.50px;background:#000"></div>
<div class="t" style="left:-258.37px;width:400px;text-align:right;top:214.1px;font-size:15px;color:#8a8a8a;letter-spacing:0.45px">Site Map (0%)</div>
<div class="ab" style="left:241.33px;top:249.80px;width:31.35px;height:25.50px;background:#000"></div>
<div class="t" style="left:-195.67px;width:400px;text-align:right;top:254.5px;font-size:15px;color:#8a8a8a;letter-spacing:0.45px">Wire Frames (0%)</div>
<div class="ab" style="left:293.57px;top:290.16px;width:41.80px;height:25.50px;background:#000"></div>
<div class="t" style="left:-143.43px;width:400px;text-align:right;top:294.8px;font-size:15px;color:#8a8a8a;letter-spacing:0.45px">Programming (0%)</div>
<div class="ab" style="left:335.37px;top:330.52px;width:41.80px;height:25.50px;background:#000"></div>
<div class="t" style="left:-101.63px;width:400px;text-align:right;top:335.2px;font-size:15px;color:#8a8a8a;letter-spacing:0.45px">Site Testing (0%)</div>
<div class="ab" style="left:377.16px;top:371.88px;width:10.45px;height:25.00px;background:#0b97cc"></div>
<div class="t" style="left:-59.84px;width:400px;text-align:right;top:375.6px;font-size:15px;color:#8a8a8a;letter-spacing:0.45px">Client Revisions (0%)</div>
<div class="ab" style="left:387.61px;top:411.04px;width:20.90px;height:12.80px;background:#3a3637"></div>
<div class="t" style="left:-49.39px;width:400px;text-align:right;top:415.9px;font-size:15px;color:#8a8a8a;letter-spacing:0.45px">Deployment (0%)</div>
<div class="ab" style="left:387.61px;top:452.60px;width:10.45px;height:25.00px;background:#0b97cc"></div>
<div class="t" style="left:-49.39px;width:400px;text-align:right;top:456.3px;font-size:15px;color:#8a8a8a;letter-spacing:0.45px">Final Client Approval (0%)</div>
<div class="ab" style="left:0.00px;top:17.00px;width:37.00px;height:8.00px;background:#8d8d8d"></div>
</div>
</body></html>
